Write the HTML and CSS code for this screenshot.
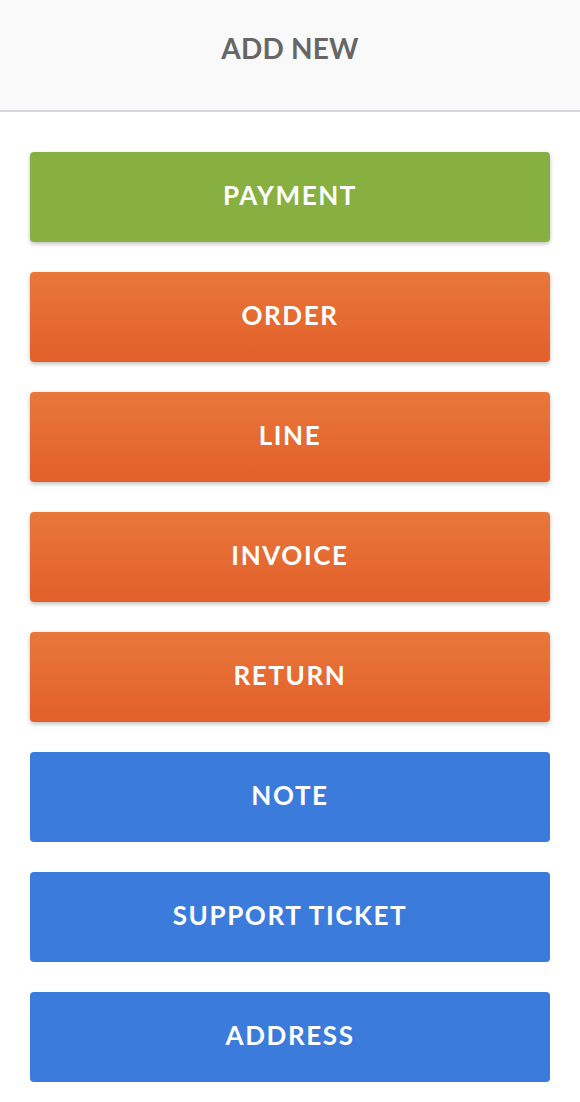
FILE: index.html
```html
<!DOCTYPE html>
<html>
<head>
  <meta charset="UTF-8">
  <title>Add New</title>
  <link rel="stylesheet" href="styles.css">
</head>
<body>
  <div class="header">
    <h1>ADD NEW</h1>
  </div>

  <div class="button-list">
    <button class="green">PAYMENT</button>
    <button class="orange">ORDER</button>
    <button class="orange">LINE</button>
    <button class="orange">INVOICE</button>
    <button class="orange">RETURN</button>
    <button class="blue">NOTE</button>
    <button class="blue">SUPPORT TICKET</button>
    <button class="blue">ADDRESS</button>
  </div>
</body>
</html>
```

FILE: styles.css
```css
body {
  margin: 0;
  font-family: Lato, "Open Sans", Arial, sans-serif;
  background-color: #fff;
}
.header {
  height: 112px;
  box-sizing: border-box;
  padding-bottom: 14px;
  background-color: #f9f9f9;
  border-bottom: 2px solid #d3d6e0;
  display: flex;
  align-items: center;
  justify-content: center;
}
.header h1 {
  margin: 0;
  font-size: 28px;
  font-weight: 700;
  color: #666;
  letter-spacing: 0.2px;
}
.button-list {
  padding: 40px 30px 20px;
  display: flex;
  flex-direction: column;
  gap: 30px;
}
button {
  height: 90px;
  padding: 0 0 4px;
  border: none;
  border-radius: 4px;
  color: white;
  font-family: inherit;
  font-size: 26px;
  font-weight: 700;
  letter-spacing: 1.6px;
  cursor: pointer;
}
.green {
  background-color: #87b040;
  box-shadow: 0 2px 4px rgba(0, 0, 0, 0.25);
}
.orange {
  background: linear-gradient(to bottom, #e8773a, #e35f2a);
  box-shadow: 0 2px 4px rgba(0, 0, 0, 0.25);
}
.blue {
  background-color: #3a7bdc;
}
```
